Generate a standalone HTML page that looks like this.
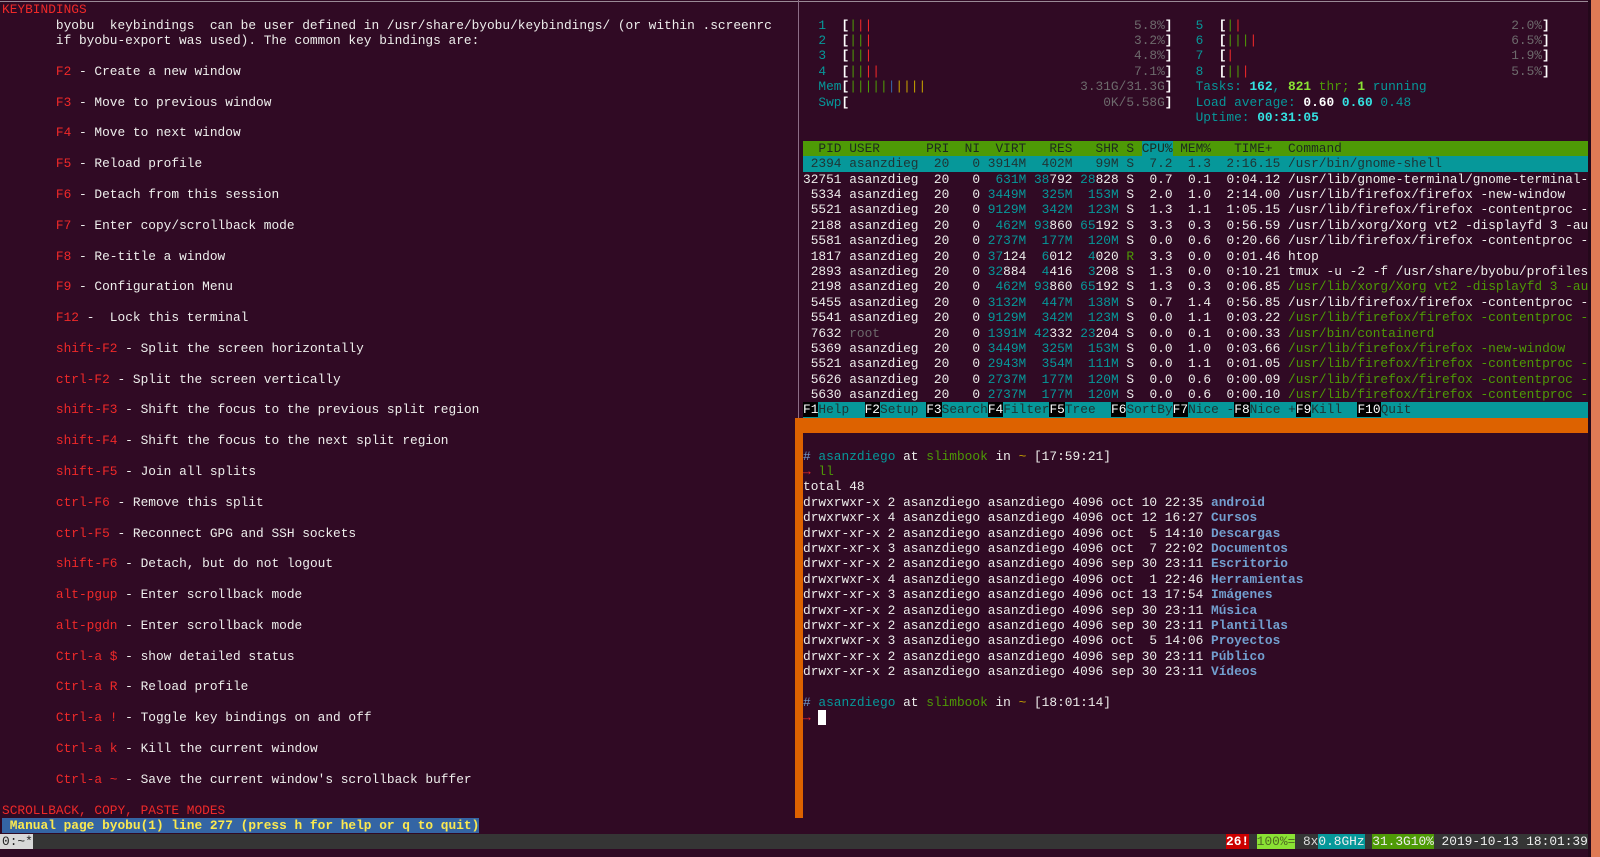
<!DOCTYPE html>
<html><head><meta charset="utf-8"><style>
html,body{margin:0;padding:0;}
body{width:1600px;height:857px;background:#300a24;position:relative;overflow:hidden;font-family:"Liberation Mono",monospace;font-size:12.83px;color:#eeeeec;}
.p{position:absolute;top:2.3px;}
.l{position:relative;height:15.4px;line-height:15.4px;white-space:pre;}
.a{position:absolute;top:0;}
.r{color:#ef2929}
.c{color:#06989a}
.C{color:#34e2e2;font-weight:bold}
.g{color:#4e9a06}
.G{color:#8ae234;font-weight:bold}
.y{color:#c4a000}
.k{color:#6d6a6c}
.w{color:#ffffff;font-weight:bold}
.B{color:#729fcf;font-weight:bold}
.hd{background:#4e9a06;color:#1e2a1e}
.sel{background:#06989a;color:#1f3333}
.fk{background:#000;color:#fff}
.fl{background:#06989a;color:#1f3333}
</style></head><body>
<div style="position:absolute;left:0;top:1px;width:1588px;height:1px;background:#9a8a96"></div>
<!-- divider top half -->
<div style="position:absolute;left:798px;top:0;width:1px;height:418px;background:#8c6d86"></div>
<!-- orange split -->
<div style="position:absolute;left:795px;top:418px;width:793px;height:15.4px;background:#dd6200"></div>
<div style="position:absolute;left:795px;top:418px;width:8px;height:400px;background:#dd6200"></div>
<!-- right edge -->
<div style="position:absolute;left:1588px;top:0;width:3px;height:857px;background:#24081b"></div>
<div style="position:absolute;left:1591px;top:0;width:9px;height:857px;background:#df7a55"></div>

<div class="p" style="left:2px;width:793px">
<div class="l r">KEYBINDINGS</div>
<div class="l">       byobu  keybindings  can be user defined in /usr/share/byobu/keybindings/ (or within .screenrc</div>
<div class="l">       if byobu-export was used). The common key bindings are:</div>
<div class="l"></div>
<div class="l">       <span class="r">F2</span> - Create a new window</div>
<div class="l"></div>
<div class="l">       <span class="r">F3</span> - Move to previous window</div>
<div class="l"></div>
<div class="l">       <span class="r">F4</span> - Move to next window</div>
<div class="l"></div>
<div class="l">       <span class="r">F5</span> - Reload profile</div>
<div class="l"></div>
<div class="l">       <span class="r">F6</span> - Detach from this session</div>
<div class="l"></div>
<div class="l">       <span class="r">F7</span> - Enter copy/scrollback mode</div>
<div class="l"></div>
<div class="l">       <span class="r">F8</span> - Re-title a window</div>
<div class="l"></div>
<div class="l">       <span class="r">F9</span> - Configuration Menu</div>
<div class="l"></div>
<div class="l">       <span class="r">F12</span> -  Lock this terminal</div>
<div class="l"></div>
<div class="l">       <span class="r">shift-F2</span> - Split the screen horizontally</div>
<div class="l"></div>
<div class="l">       <span class="r">ctrl-F2</span> - Split the screen vertically</div>
<div class="l"></div>
<div class="l">       <span class="r">shift-F3</span> - Shift the focus to the previous split region</div>
<div class="l"></div>
<div class="l">       <span class="r">shift-F4</span> - Shift the focus to the next split region</div>
<div class="l"></div>
<div class="l">       <span class="r">shift-F5</span> - Join all splits</div>
<div class="l"></div>
<div class="l">       <span class="r">ctrl-F6</span> - Remove this split</div>
<div class="l"></div>
<div class="l">       <span class="r">ctrl-F5</span> - Reconnect GPG and SSH sockets</div>
<div class="l"></div>
<div class="l">       <span class="r">shift-F6</span> - Detach, but do not logout</div>
<div class="l"></div>
<div class="l">       <span class="r">alt-pgup</span> - Enter scrollback mode</div>
<div class="l"></div>
<div class="l">       <span class="r">alt-pgdn</span> - Enter scrollback mode</div>
<div class="l"></div>
<div class="l">       <span class="r">Ctrl-a $</span> - show detailed status</div>
<div class="l"></div>
<div class="l">       <span class="r">Ctrl-a R</span> - Reload profile</div>
<div class="l"></div>
<div class="l">       <span class="r">Ctrl-a !</span> - Toggle key bindings on and off</div>
<div class="l"></div>
<div class="l">       <span class="r">Ctrl-a k</span> - Kill the current window</div>
<div class="l"></div>
<div class="l">       <span class="r">Ctrl-a ~</span> - Save the current window's scrollback buffer</div>
<div class="l"></div>
<div class="l r">SCROLLBACK, COPY, PASTE MODES</div>
<div class="l"><span style="background:#3465a4;color:#fce94f;font-weight:bold"> Manual page byobu(1) line 277 (press h for help or q to quit)</span></div>
</div>

<div class="p" style="left:803px;width:785.4px">
<div class="l"></div>
<div class="l"><span class="a c" style="left:2ch">1</span><span class="a w" style="left:5ch">[</span><span class="a" style="left:6ch"><span class="g">|</span><span class="r">||</span></span><span class="a k" style="left:43ch">5.8%</span><span class="a w" style="left:47ch">]</span><span class="a c" style="left:51ch">5</span><span class="a w" style="left:54ch">[</span><span class="a" style="left:55ch"><span class="g">|</span><span class="r">|</span></span><span class="a k" style="left:92ch">2.0%</span><span class="a w" style="left:96ch">]</span></div>
<div class="l"><span class="a c" style="left:2ch">2</span><span class="a w" style="left:5ch">[</span><span class="a" style="left:6ch"><span class="g">||</span><span class="r">|</span></span><span class="a k" style="left:43ch">3.2%</span><span class="a w" style="left:47ch">]</span><span class="a c" style="left:51ch">6</span><span class="a w" style="left:54ch">[</span><span class="a" style="left:55ch"><span class="g">|||</span><span class="r">|</span></span><span class="a k" style="left:92ch">6.5%</span><span class="a w" style="left:96ch">]</span></div>
<div class="l"><span class="a c" style="left:2ch">3</span><span class="a w" style="left:5ch">[</span><span class="a" style="left:6ch"><span class="g">||</span><span class="r">|</span></span><span class="a k" style="left:43ch">4.8%</span><span class="a w" style="left:47ch">]</span><span class="a c" style="left:51ch">7</span><span class="a w" style="left:54ch">[</span><span class="a" style="left:55ch"><span class="r">|</span></span><span class="a k" style="left:92ch">1.9%</span><span class="a w" style="left:96ch">]</span></div>
<div class="l"><span class="a c" style="left:2ch">4</span><span class="a w" style="left:5ch">[</span><span class="a" style="left:6ch"><span class="g">||</span><span class="r">||</span></span><span class="a k" style="left:43ch">7.1%</span><span class="a w" style="left:47ch">]</span><span class="a c" style="left:51ch">8</span><span class="a w" style="left:54ch">[</span><span class="a" style="left:55ch"><span class="g">||</span><span class="r">|</span></span><span class="a k" style="left:92ch">5.5%</span><span class="a w" style="left:96ch">]</span></div>
<div class="l"><span class="a c" style="left:2ch">Mem</span><span class="a w" style="left:5ch">[</span><span class="a" style="left:6ch"><span class="g">|||||</span><span style="color:#3465a4">|</span><span class="y">||||</span></span><span class="a k" style="left:36ch">3.31G/31.3G</span><span class="a w" style="left:47ch">]</span><span class="a" style="left:51ch"><span class="c">Tasks: </span><span class="C">162</span><span class="c">, </span><span class="G">821</span><span class="g"> thr; </span><span class="G">1</span><span class="c"> running</span></span></div>
<div class="l"><span class="a c" style="left:2ch">Swp</span><span class="a w" style="left:5ch">[</span><span class="a k" style="left:39ch">0K/5.58G</span><span class="a w" style="left:47ch">]</span><span class="a" style="left:51ch"><span class="c">Load average: </span><span class="w">0.60</span> <span class="C">0.60</span><span class="c"> 0.48</span></span></div>
<div class="l"><span class="a" style="left:51ch"><span class="c">Uptime: </span><span class="C">00:31:05</span></span></div>
<div class="l"></div>
<div class="l hd">  PID USER      PRI  NI  VIRT   RES   SHR S <span style="background:#06989a">CPU%</span> MEM%   TIME+  Command</div>
<div class="l sel"> 2394 asanzdieg  20   0 3914M  402M   99M S  7.2  1.3  2:16.15 /usr/bin/gnome-shell</div>
<div class="l">32751 asanzdieg  20   0  <span class="c">631M</span> <span class="c">38</span>792 <span class="c">28</span>828 S  0.7  0.1  0:04.12 /usr/lib/gnome-terminal/gnome-terminal-</div>
<div class="l"> 5334 asanzdieg  20   0 <span class="c">3449M</span>  <span class="c">325M</span>  <span class="c">153M</span> S  2.0  1.0  2:14.00 /usr/lib/firefox/firefox -new-window</div>
<div class="l"> 5521 asanzdieg  20   0 <span class="c">9129M</span>  <span class="c">342M</span>  <span class="c">123M</span> S  1.3  1.1  1:05.15 /usr/lib/firefox/firefox -contentproc -</div>
<div class="l"> 2188 asanzdieg  20   0  <span class="c">462M</span> <span class="c">93</span>860 <span class="c">65</span>192 S  3.3  0.3  0:56.59 /usr/lib/xorg/Xorg vt2 -displayfd 3 -au</div>
<div class="l"> 5581 asanzdieg  20   0 <span class="c">2737M</span>  <span class="c">177M</span>  <span class="c">120M</span> S  0.0  0.6  0:20.66 /usr/lib/firefox/firefox -contentproc -</div>
<div class="l"> 1817 asanzdieg  20   0 <span class="c">37</span>124  <span class="c">6</span>012  <span class="c">4</span>020 <span class="g">R</span>  3.3  0.0  0:01.46 htop</div>
<div class="l"> 2893 asanzdieg  20   0 <span class="c">32</span>884  <span class="c">4</span>416  <span class="c">3</span>208 S  1.3  0.0  0:10.21 tmux -u -2 -f /usr/share/byobu/profiles</div>
<div class="l"> 2198 asanzdieg  20   0  <span class="c">462M</span> <span class="c">93</span>860 <span class="c">65</span>192 S  1.3  0.3  0:06.85 <span class="g">/usr/lib/xorg/Xorg vt2 -displayfd 3 -au</span></div>
<div class="l"> 5455 asanzdieg  20   0 <span class="c">3132M</span>  <span class="c">447M</span>  <span class="c">138M</span> S  0.7  1.4  0:56.85 /usr/lib/firefox/firefox -contentproc -</div>
<div class="l"> 5541 asanzdieg  20   0 <span class="c">9129M</span>  <span class="c">342M</span>  <span class="c">123M</span> S  0.0  1.1  0:03.22 <span class="g">/usr/lib/firefox/firefox -contentproc -</span></div>
<div class="l"> 7632 <span class="k">root     </span>  20   0 <span class="c">1391M</span> <span class="c">42</span>332 <span class="c">23</span>204 S  0.0  0.1  0:00.33 <span class="g">/usr/bin/containerd</span></div>
<div class="l"> 5369 asanzdieg  20   0 <span class="c">3449M</span>  <span class="c">325M</span>  <span class="c">153M</span> S  0.0  1.0  0:03.66 <span class="g">/usr/lib/firefox/firefox -new-window</span></div>
<div class="l"> 5521 asanzdieg  20   0 <span class="c">2943M</span>  <span class="c">354M</span>  <span class="c">111M</span> S  0.0  1.1  0:01.05 <span class="g">/usr/lib/firefox/firefox -contentproc -</span></div>
<div class="l"> 5626 asanzdieg  20   0 <span class="c">2737M</span>  <span class="c">177M</span>  <span class="c">120M</span> S  0.0  0.6  0:00.09 <span class="g">/usr/lib/firefox/firefox -contentproc -</span></div>
<div class="l"> 5630 asanzdieg  20   0 <span class="c">2737M</span>  <span class="c">177M</span>  <span class="c">120M</span> S  0.0  0.6  0:00.10 <span class="g">/usr/lib/firefox/firefox -contentproc -</span></div>
<div class="l fl"><span class="fk">F1</span>Help  <span class="fk">F2</span>Setup <span class="fk">F3</span>Search<span class="fk">F4</span>Filter<span class="fk">F5</span>Tree  <span class="fk">F6</span>SortBy<span class="fk">F7</span>Nice -<span class="fk">F8</span>Nice +<span class="fk">F9</span>Kill  <span class="fk">F10</span>Quit</div>
<div class="l"></div>
<div class="l"></div>
<div class="l"><span style="color:#729fcf">#</span> <span class="c">asanzdiego</span> at <span class="g">slimbook</span> in <span class="y">~</span> [17:59:21]</div>
<div class="l"><span class="r">→</span> <span class="g">ll</span></div>
<div class="l">total 48</div>
<div class="l">drwxrwxr-x 2 asanzdiego asanzdiego 4096 oct 10 22:35 <span class="B">android</span></div>
<div class="l">drwxrwxr-x 4 asanzdiego asanzdiego 4096 oct 12 16:27 <span class="B">Cursos</span></div>
<div class="l">drwxr-xr-x 2 asanzdiego asanzdiego 4096 oct  5 14:10 <span class="B">Descargas</span></div>
<div class="l">drwxr-xr-x 3 asanzdiego asanzdiego 4096 oct  7 22:02 <span class="B">Documentos</span></div>
<div class="l">drwxr-xr-x 2 asanzdiego asanzdiego 4096 sep 30 23:11 <span class="B">Escritorio</span></div>
<div class="l">drwxrwxr-x 4 asanzdiego asanzdiego 4096 oct  1 22:46 <span class="B">Herramientas</span></div>
<div class="l">drwxr-xr-x 3 asanzdiego asanzdiego 4096 oct 13 17:54 <span class="B">Imágenes</span></div>
<div class="l">drwxr-xr-x 2 asanzdiego asanzdiego 4096 sep 30 23:11 <span class="B">Música</span></div>
<div class="l">drwxr-xr-x 2 asanzdiego asanzdiego 4096 sep 30 23:11 <span class="B">Plantillas</span></div>
<div class="l">drwxrwxr-x 3 asanzdiego asanzdiego 4096 oct  5 14:06 <span class="B">Proyectos</span></div>
<div class="l">drwxr-xr-x 2 asanzdiego asanzdiego 4096 sep 30 23:11 <span class="B">Público</span></div>
<div class="l">drwxr-xr-x 2 asanzdiego asanzdiego 4096 sep 30 23:11 <span class="B">Vídeos</span></div>
<div class="l"></div>
<div class="l"><span style="color:#729fcf">#</span> <span class="c">asanzdiego</span> at <span class="g">slimbook</span> in <span class="y">~</span> [18:01:14]</div>
<div class="l"><span class="r">→</span> <span style="background:#ffffff"> </span></div>
</div>

<!-- status bar -->
<div style="position:absolute;left:0;top:834px;width:1588px;height:15px;background:#353535"></div>
<div class="p" style="left:2px;top:833.9px;width:1586px">
<div class="l"><span class="a" style="left:-2px;background:#d8d8d8;color:#222;padding-left:2px">0:~*</span><span class="a" style="left:159ch;background:#cc0000;color:#fff;font-weight:bold">26!</span><span class="a" style="left:163ch;background:#8ae234;color:#4e6a20">100%=</span><span class="a" style="left:169ch;color:#ddd">8x</span><span class="a" style="left:171ch;background:#06989a;color:#eee">0.8GHz</span><span class="a" style="left:178ch;background:#4e9a06;color:#eee">31.3G10%</span><span class="a" style="left:187ch;color:#eee">2019-10-13 18:01:39</span></div>
</div>
</body></html>
